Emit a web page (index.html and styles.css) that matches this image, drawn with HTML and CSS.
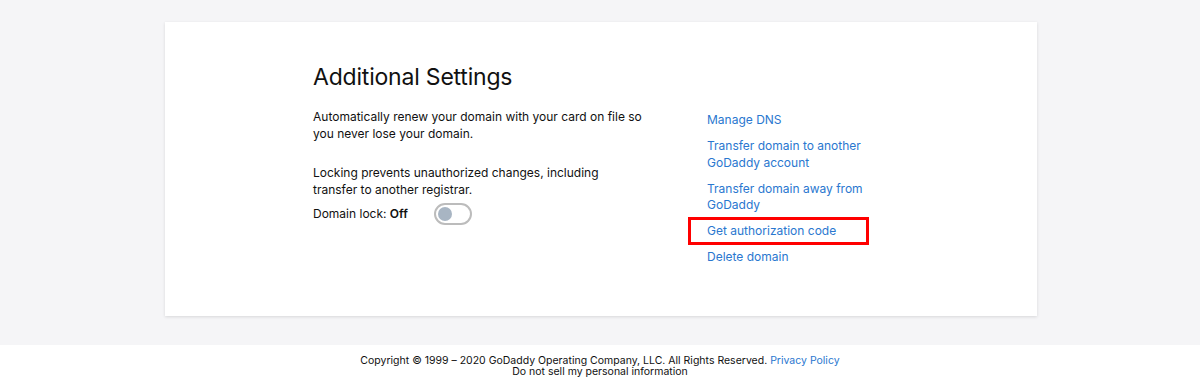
FILE: index.html
```html
<!DOCTYPE html>
<html lang="en">
<head>
    <meta charset="UTF-8">
    <meta name="viewport" content="width=device-width, initial-scale=1.0">
    <title>Additional Settings</title>
    <link rel="stylesheet" href="styles.css">
</head>
<body>
    <main class="page">
        <section class="settings-card">
            <h1>Additional Settings</h1>
            <div class="settings-grid">
                <div class="settings-left">
                    <p>Automatically renew your domain with your card on file so you never lose your domain.</p>
                    <p class="lock-text">Locking prevents unauthorized changes, including transfer to another registrar.</p>
                    <div class="lock-row">
                        <span>Domain lock: <strong>Off</strong></span>
                        <button class="toggle" type="button" aria-label="Domain lock"><span class="knob"></span></button>
                    </div>
                </div>
                <ul class="settings-links">
                    <li><a href="#">Manage DNS</a></li>
                    <li><a href="#">Transfer domain to another GoDaddy account</a></li>
                    <li><a href="#">Transfer domain away from GoDaddy</a></li>
                    <li class="highlight"><a href="#">Get authorization code</a></li>
                    <li><a href="#">Delete domain</a></li>
                </ul>
            </div>
        </section>
    </main>

    <footer class="footer">
        <p>Copyright © 1999 – 2020 GoDaddy Operating Company, LLC. All Rights Reserved. <a href="#">Privacy Policy</a></p>
        <p>Do not sell my personal information</p>
    </footer>
</body>
</html>
```

FILE: styles.css
```css
* {
    margin: 0;
    padding: 0;
    box-sizing: border-box;
}

body {
    font-family: 'Inter', 'Liberation Sans', sans-serif;
    color: #111;
    background: #fff;
}

.page {
    background: #f5f5f7;
    height: 345px;
    padding-top: 22px;
}

.settings-card {
    width: 872px;
    height: 294px;
    margin-left: 165px;
    background: #fff;
    box-shadow: 0 1px 3px rgba(0, 0, 0, 0.12);
    padding: 40px 0 0 148px;
}

.settings-card h1 {
    font-size: 23px;
    font-weight: 400;
    letter-spacing: -0.2px;
    line-height: 30px;
    color: #111;
}

.settings-grid {
    display: grid;
    grid-template-columns: 394px 200px;
    margin-top: 17px;
    font-size: 12px;
    line-height: 16.5px;
}

.settings-left p {
    width: 330px;
}

.lock-text {
    margin-top: 23px;
}

.lock-row {
    display: flex;
    align-items: center;
    gap: 26px;
    margin-top: 5px;
}

.lock-row strong {
    font-weight: 600;
}

.toggle {
    width: 38px;
    height: 22px;
    border: 2px solid #bcbcbc;
    border-radius: 11px;
    background: #fff;
    display: flex;
    align-items: center;
    padding-left: 2px;
}

.knob {
    width: 14px;
    height: 14px;
    border-radius: 50%;
    background: #a8b5c3;
}

.settings-links {
    list-style: none;
    margin-top: 3px;
    display: flex;
    flex-direction: column;
    gap: 9.5px;
}

.settings-links a {
    color: #2a77cf;
    text-decoration: none;
}

.highlight {
    position: relative;
}

.highlight::after {
    content: '';
    position: absolute;
    box-sizing: border-box;
    left: -19px;
    top: -6px;
    width: 181px;
    height: 28px;
    border: 3px solid #f00;
}

.footer {
    text-align: center;
    font-size: 10.5px;
    line-height: 11px;
    color: #111;
    padding-top: 10px;
}

.footer a {
    color: #2a77cf;
    text-decoration: none;
}
```
